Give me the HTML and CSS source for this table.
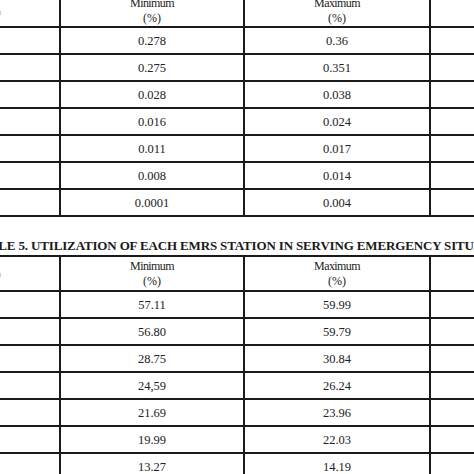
FILE: index.html
```html
<!DOCTYPE html>
<html>
<head>
<meta charset="utf-8">
<link rel="stylesheet" href="styles.css">
</head>
<body>
<div class="page">
  <div class="tbl tbl-first">
    <div class="cell head label"><span class="cut">Station</span></div>
    <div class="cell head"><span class="hmin">Minimum</span><span>(%)</span></div>
    <div class="cell head"><span class="hmin">Maximum</span><span>(%)</span></div>
    <div class="cell head"></div>

    <div class="cell"></div><div class="cell">0.278</div><div class="cell">0.36</div><div class="cell"></div>
    <div class="cell"></div><div class="cell">0.275</div><div class="cell">0.351</div><div class="cell"></div>
    <div class="cell"></div><div class="cell">0.028</div><div class="cell">0.038</div><div class="cell"></div>
    <div class="cell"></div><div class="cell">0.016</div><div class="cell">0.024</div><div class="cell"></div>
    <div class="cell"></div><div class="cell">0.011</div><div class="cell">0.017</div><div class="cell"></div>
    <div class="cell"></div><div class="cell">0.008</div><div class="cell">0.014</div><div class="cell"></div>
    <div class="cell"></div><div class="cell">0.0001</div><div class="cell">0.004</div><div class="cell"></div>
  </div>

  <div class="title">TABLE 5. UTILIZATION OF EACH EMRS STATION IN SERVING EMERGENCY SITUATIONS</div>

  <div class="tbl">
    <div class="cell head label"><span class="cut">Station</span></div>
    <div class="cell head"><span class="hmin">Minimum</span><span>(%)</span></div>
    <div class="cell head"><span class="hmin">Maximum</span><span>(%)</span></div>
    <div class="cell head"></div>

    <div class="cell"></div><div class="cell">57.11</div><div class="cell">59.99</div><div class="cell"></div>
    <div class="cell"></div><div class="cell">56.80</div><div class="cell">59.79</div><div class="cell"></div>
    <div class="cell"></div><div class="cell">28.75</div><div class="cell">30.84</div><div class="cell"></div>
    <div class="cell"></div><div class="cell">24,59</div><div class="cell">26.24</div><div class="cell"></div>
    <div class="cell"></div><div class="cell">21.69</div><div class="cell">23.96</div><div class="cell"></div>
    <div class="cell"></div><div class="cell">19.99</div><div class="cell">22.03</div><div class="cell"></div>
    <div class="cell"></div><div class="cell">13.27</div><div class="cell">14.19</div><div class="cell"></div>
  </div>
</div>
</body>
</html>
```
FILE: styles.css
```css
html, body {
  margin: 0;
  padding: 0;
  background: #ffffff;
  overflow: hidden;
}

.page {
  width: 474px;
  height: 474px;
  overflow: hidden;
  font-family: "Liberation Serif", "Times New Roman", serif;
  color: #222222;
}

.tbl {
  display: grid;
  grid-template-columns: 161px 184px 186px 200px;
  grid-template-rows: 35px;
  grid-auto-rows: 27px;
  margin-left: -100px;
  border-top: 2px solid #1a1a1a;
  width: 731px;
}

.tbl-first {
  margin-top: -9px;
}

.cell {
  border-right: 2px solid #1a1a1a;
  border-bottom: 2px solid #1a1a1a;
  display: flex;
  align-items: center;
  justify-content: center;
  font-size: 12.5px;
  line-height: 15px;
  padding-top: 1px;
  box-sizing: border-box;
}

.cell.head {
  flex-direction: column;
  padding-top: 0;
  font-size: 12px;
}

.tbl-first .cell.head {
  padding-top: 3px;
}

.hmin {
  letter-spacing: -0.6px;
}

.label {
  align-items: flex-end;
  padding-right: 58px;
}

.cut {
  color: #8a8a8a;
  font-size: 10px;
}

.title {
  margin-left: -27px;
  white-space: nowrap;
  font-weight: bold;
  font-size: 13px;
  letter-spacing: -0.15px;
  line-height: 16px;
  padding-top: 21px;
  padding-bottom: 1px;
  color: #1a1a1a;
}
```
